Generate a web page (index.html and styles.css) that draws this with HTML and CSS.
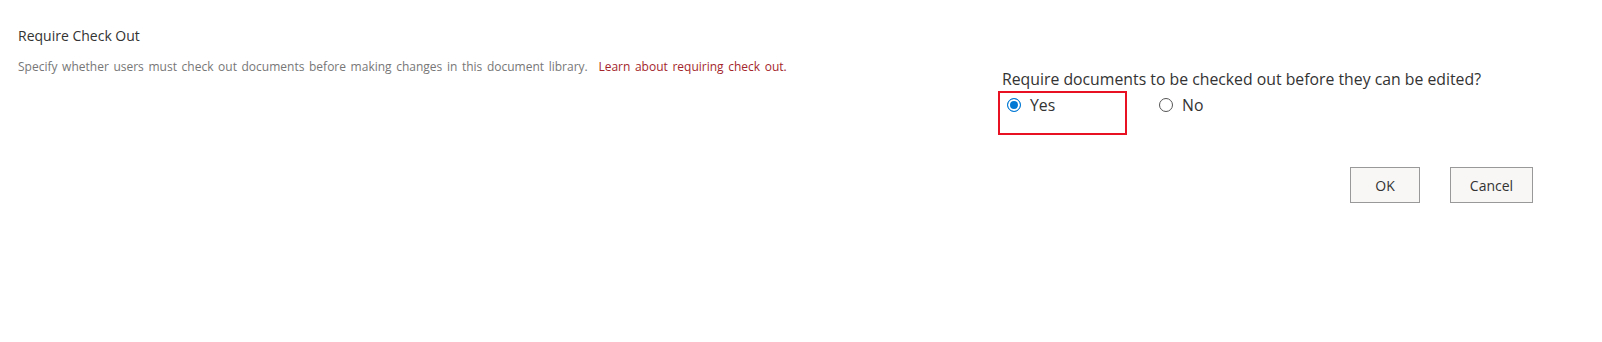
FILE: index.html
```html
<!DOCTYPE html>
<html>
<head>
<meta charset="utf-8">
<link rel="stylesheet" href="styles.css">
</head>
<body>
<div class="page">
  <div class="left">
    <div class="title">Require Check Out</div>
    <div class="desc">Specify whether users must check out documents before making changes in this document library. <a class="link" href="#">Learn about requiring check out.</a></div>
  </div>
  <div class="right">
    <div class="question">Require documents to be checked out before they can be edited?</div>
    <div class="options">
      <label class="opt opt-yes"><span class="radio checked"></span><span>Yes</span><span class="highlight"></span></label>
      <label class="opt"><span class="radio"></span><span>No</span></label>
    </div>
    <div class="buttons">
      <button class="btn btn-ok">OK</button>
      <button class="btn btn-cancel">Cancel</button>
    </div>
  </div>
</div>
</body>
</html>
```

FILE: styles.css
```css
body {
  margin: 0;
  background: #fff;
  font-family: "Segoe UI", "Open Sans", "Liberation Sans", sans-serif;
  color: #333;
}
.page {
  display: flex;
  padding: 26px 0 0 18px;
}
.left {
  width: 984px;
}
.title {
  font-size: 14px;
  line-height: 19px;
  color: #333;
}
.desc {
  margin-top: 14px;
  font-size: 12px;
  line-height: 16px;
  color: #777;
  word-spacing: 1.5px;
}
.link {
  color: #a4262c;
  text-decoration: none;
  margin-left: 6px;
}
.right {
  width: 531px;
  padding-top: 43px;
}
.question {
  font-size: 15.8px;
  line-height: 21px;
  color: #333;
}
.options {
  display: flex;
  margin-top: 4px;
  height: 22px;
}
.opt {
  position: relative;
  display: flex;
  align-items: center;
  gap: 9px;
  font-size: 15.8px;
  color: #333;
  width: 152px;
  padding-left: 5px;
  box-sizing: border-box;
}
.radio {
  width: 14px;
  height: 14px;
  border: 1px solid #555;
  border-radius: 50%;
  box-sizing: border-box;
  background: #fff;
}
.radio.checked {
  border: 1.5px solid #0078d4;
  background: #0078d4;
  box-shadow: inset 0 0 0 2px #fff;
}
.highlight {
  position: absolute;
  left: -4px;
  top: -3px;
  width: 129px;
  height: 44px;
  border: 2px solid #e81123;
  box-sizing: border-box;
}
.buttons {
  display: flex;
  justify-content: flex-end;
  gap: 30px;
  margin-top: 51px;
}
.btn {
  font-family: inherit;
  font-size: 14px;
  color: #333;
  background: #f8f7f6;
  border: 1px solid #999;
  height: 36px;
  padding: 0;
}
.btn-ok {
  width: 70px;
}
.btn-cancel {
  width: 83px;
}
```
